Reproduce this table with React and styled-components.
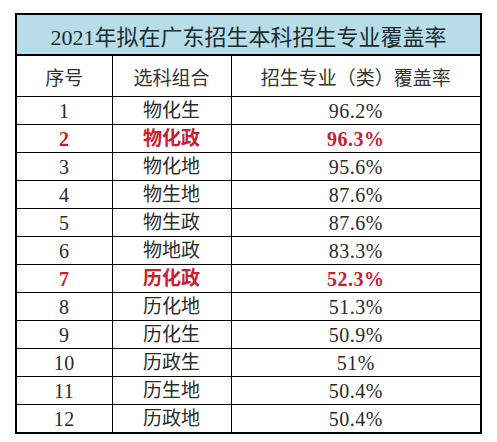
import React from "react";
import styled, { createGlobalStyle } from "styled-components";

const Global = createGlobalStyle`
  html, body { margin: 0; padding: 0; background: #fff; }
  body { font-family: "Liberation Serif", "Noto Sans CJK SC", serif; }
`;

const Page = styled.div`
  padding: 13px 0 0 15px;
`;

const Table = styled.table`
  border-collapse: collapse;
  width: 467px;
  table-layout: fixed;
  border: 2px solid #000;
  font-family: "Liberation Serif", "Noto Sans CJK SC", serif;
  color: #2a2a2a;
`;

const TitleCell = styled.th`
  height: 39px;
  padding: 0;
  background: #b7dde8;
  border: 2px solid #000;
  font-weight: 400;
  font-size: 22px;
  color: #1e2a2e;
  text-align: center;
`;

const HeadCell = styled.th`
  height: 40px;
  padding: 0;
  border: 1px solid #000;
  font-weight: 400;
  font-size: 19px;
  color: #333;
  text-align: center;
`;

const Cell = styled.td`
  height: 27px;
  padding: 0;
  border: 1px solid #000;
  font-size: 19px;
  line-height: 1;
  text-align: center;
  color: ${(p) => (p.$hl ? "#c8202e" : "#2a2a2a")};
  font-weight: ${(p) => (p.$hl ? 700 : 400)};
`;

const Num = styled.span`
  font-size: 20px;
  letter-spacing: 0.5px;
`;

const rows = [
  ["1", "物化生", "96.2%"],
  ["2", "物化政", "96.3%", true],
  ["3", "物化地", "95.6%"],
  ["4", "物生地", "87.6%"],
  ["5", "物生政", "87.6%"],
  ["6", "物地政", "83.3%"],
  ["7", "历化政", "52.3%", true],
  ["8", "历化地", "51.3%"],
  ["9", "历化生", "50.9%"],
  ["10", "历政生", "51%"],
  ["11", "历生地", "50.4%"],
  ["12", "历政地", "50.4%"],
];

export default function App() {
  return (
    <Page>
      <Global />
      <Table>
        <colgroup>
          <col style={{ width: 96 }} />
          <col style={{ width: 119 }} />
          <col />
        </colgroup>
        <thead>
          <tr>
            <TitleCell colSpan={3}>2021年拟在广东招生本科招生专业覆盖率</TitleCell>
          </tr>
          <tr>
            <HeadCell>序号</HeadCell>
            <HeadCell>选科组合</HeadCell>
            <HeadCell>招生专业（类）覆盖率</HeadCell>
          </tr>
        </thead>
        <tbody>
          {rows.map(([n, c, v, hl]) => (
            <tr key={n}>
              <Cell $hl={hl}><Num>{n}</Num></Cell>
              <Cell $hl={hl}>{c}</Cell>
              <Cell $hl={hl}><Num>{v}</Num></Cell>
            </tr>
          ))}
        </tbody>
      </Table>
    </Page>
  );
}
